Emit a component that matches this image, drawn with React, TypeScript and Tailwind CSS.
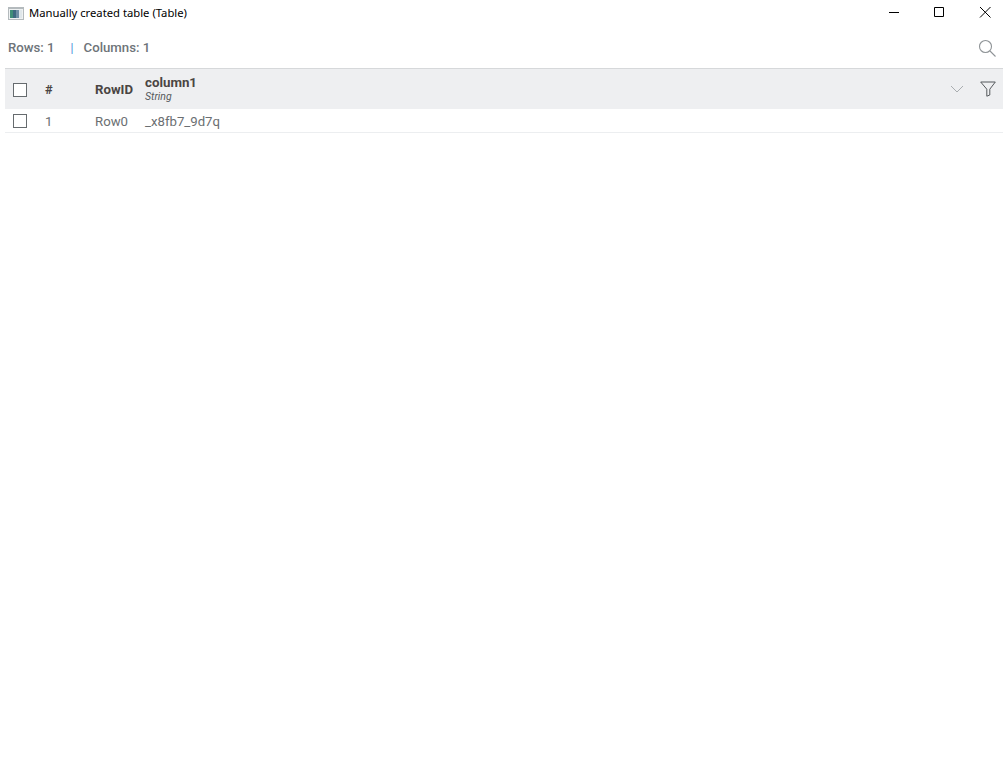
import React from 'react';

const Checkbox: React.FC = () => (
    <span className="block w-[14px] h-[14px] border border-[#666b6e] bg-white" />
);

const AppIcon: React.FC = () => (
    <svg width="16" height="13" viewBox="0 0 16 13" className="block">
        <rect x="0" y="0" width="16" height="13" fill="#b4babd" />
        <rect x="1" y="2" width="14" height="10" fill="#eef1f2" />
        <rect x="2" y="3" width="3" height="8" fill="#3f8f78" />
        <rect x="5" y="3" width="3" height="8" fill="#3d6a80" />
        <rect x="8" y="3" width="3" height="8" fill="#6f8fa5" />
        <rect x="11" y="3" width="3" height="8" fill="#dfe6ea" />
    </svg>
);

const App: React.FC = () => {
    return (
        <div className="w-[1008px] h-[757px] bg-white overflow-hidden font-['Roboto',sans-serif]">
            {/* Window title bar */}
            <div className="h-[26px] flex items-center">
                <div className="ml-2 mr-[5px]">
                    <AppIcon />
                </div>
                <span className="font-['Noto_Sans','Open_Sans',sans-serif] text-[11.25px] text-black">Manually created table (Table)</span>
                <div className="ml-auto flex items-center">
                    <svg width="46" height="26" viewBox="0 0 46 26" className="block">
                        <path d="M19 12.5h10" stroke="#000" strokeWidth="1" />
                    </svg>
                    <svg width="46" height="26" viewBox="0 0 46 26" className="block">
                        <path d="M18.5 7.5h9v9h-9z" stroke="#000" strokeWidth="1" fill="none" />
                    </svg>
                    <svg width="46" height="26" viewBox="0 0 46 26" className="block">
                        <path d="M18 7l10.5 10.5M28.5 7L18 17.5" stroke="#000" strokeWidth="1" fill="none" />
                    </svg>
                </div>
            </div>

            {/* Table info */}
            <div className="h-[42px] flex items-center pl-2 pr-[12px] text-[13.2px] font-medium text-[#6e7479] pt-[2px]">
                <span>Rows: 1</span>
                <span className="ml-[16px] text-[#4a90d9] font-normal text-[12px]">|</span>
                <span className="ml-[10px]">Columns: 1</span>
                <svg width="18" height="18" viewBox="0 0 18 18" className="ml-auto block" fill="none" stroke="#8f9497" strokeWidth="1.1">
                    <circle cx="7.5" cy="7.5" r="6" />
                    <path d="M12 12l5.5 5.5" />
                </svg>
            </div>

            {/* Table */}
            <div className="mx-[5px] w-[998px]">
                <div className="h-[41px] flex items-center bg-[#eeeff1] border-t border-[#d6d8da] text-[#4a4543]">
                    <div className="w-[40px] pl-2 pt-[2px]">
                        <Checkbox />
                    </div>
                    <div className="w-[50px] text-[13px] font-bold pt-[1px]">#</div>
                    <div className="w-[50px] text-[13.2px] font-bold pt-[1px]">RowID</div>
                    <div className="flex flex-col">
                        <span className="text-[13.3px] leading-[14px] font-bold">column1</span>
                        <span className="text-[10.5px] leading-[13px] italic text-[#55595c]">String</span>
                    </div>
                    <div className="ml-auto flex items-center pr-[7px]">
                        <svg width="14" height="8" viewBox="0 0 14 8" className="block mr-[16px]" fill="none" stroke="#a9adb0" strokeWidth="1">
                            <path d="M1 1l6 6 6-6" />
                        </svg>
                        <svg width="16" height="16" viewBox="0 0 16 16" className="block" fill="none" stroke="#55595c" strokeWidth="1">
                            <path d="M.7 1h14.6L9.8 8.2v5.8L6.8 15.2V8.2z" />
                        </svg>
                    </div>
                </div>
                <div className="h-[24px] flex items-center border-b border-[#eceef0] text-[13.2px] text-[#6b6f72]">
                    <div className="w-[40px] pl-2">
                        <Checkbox />
                    </div>
                    <div className="w-[50px] pt-[2px]">1</div>
                    <div className="w-[50px] pt-[2px]">Row0</div>
                    <div className="pt-[2px]">_x8fb7_9d7q</div>
                </div>
            </div>
        </div>
    );
};

export default App;
